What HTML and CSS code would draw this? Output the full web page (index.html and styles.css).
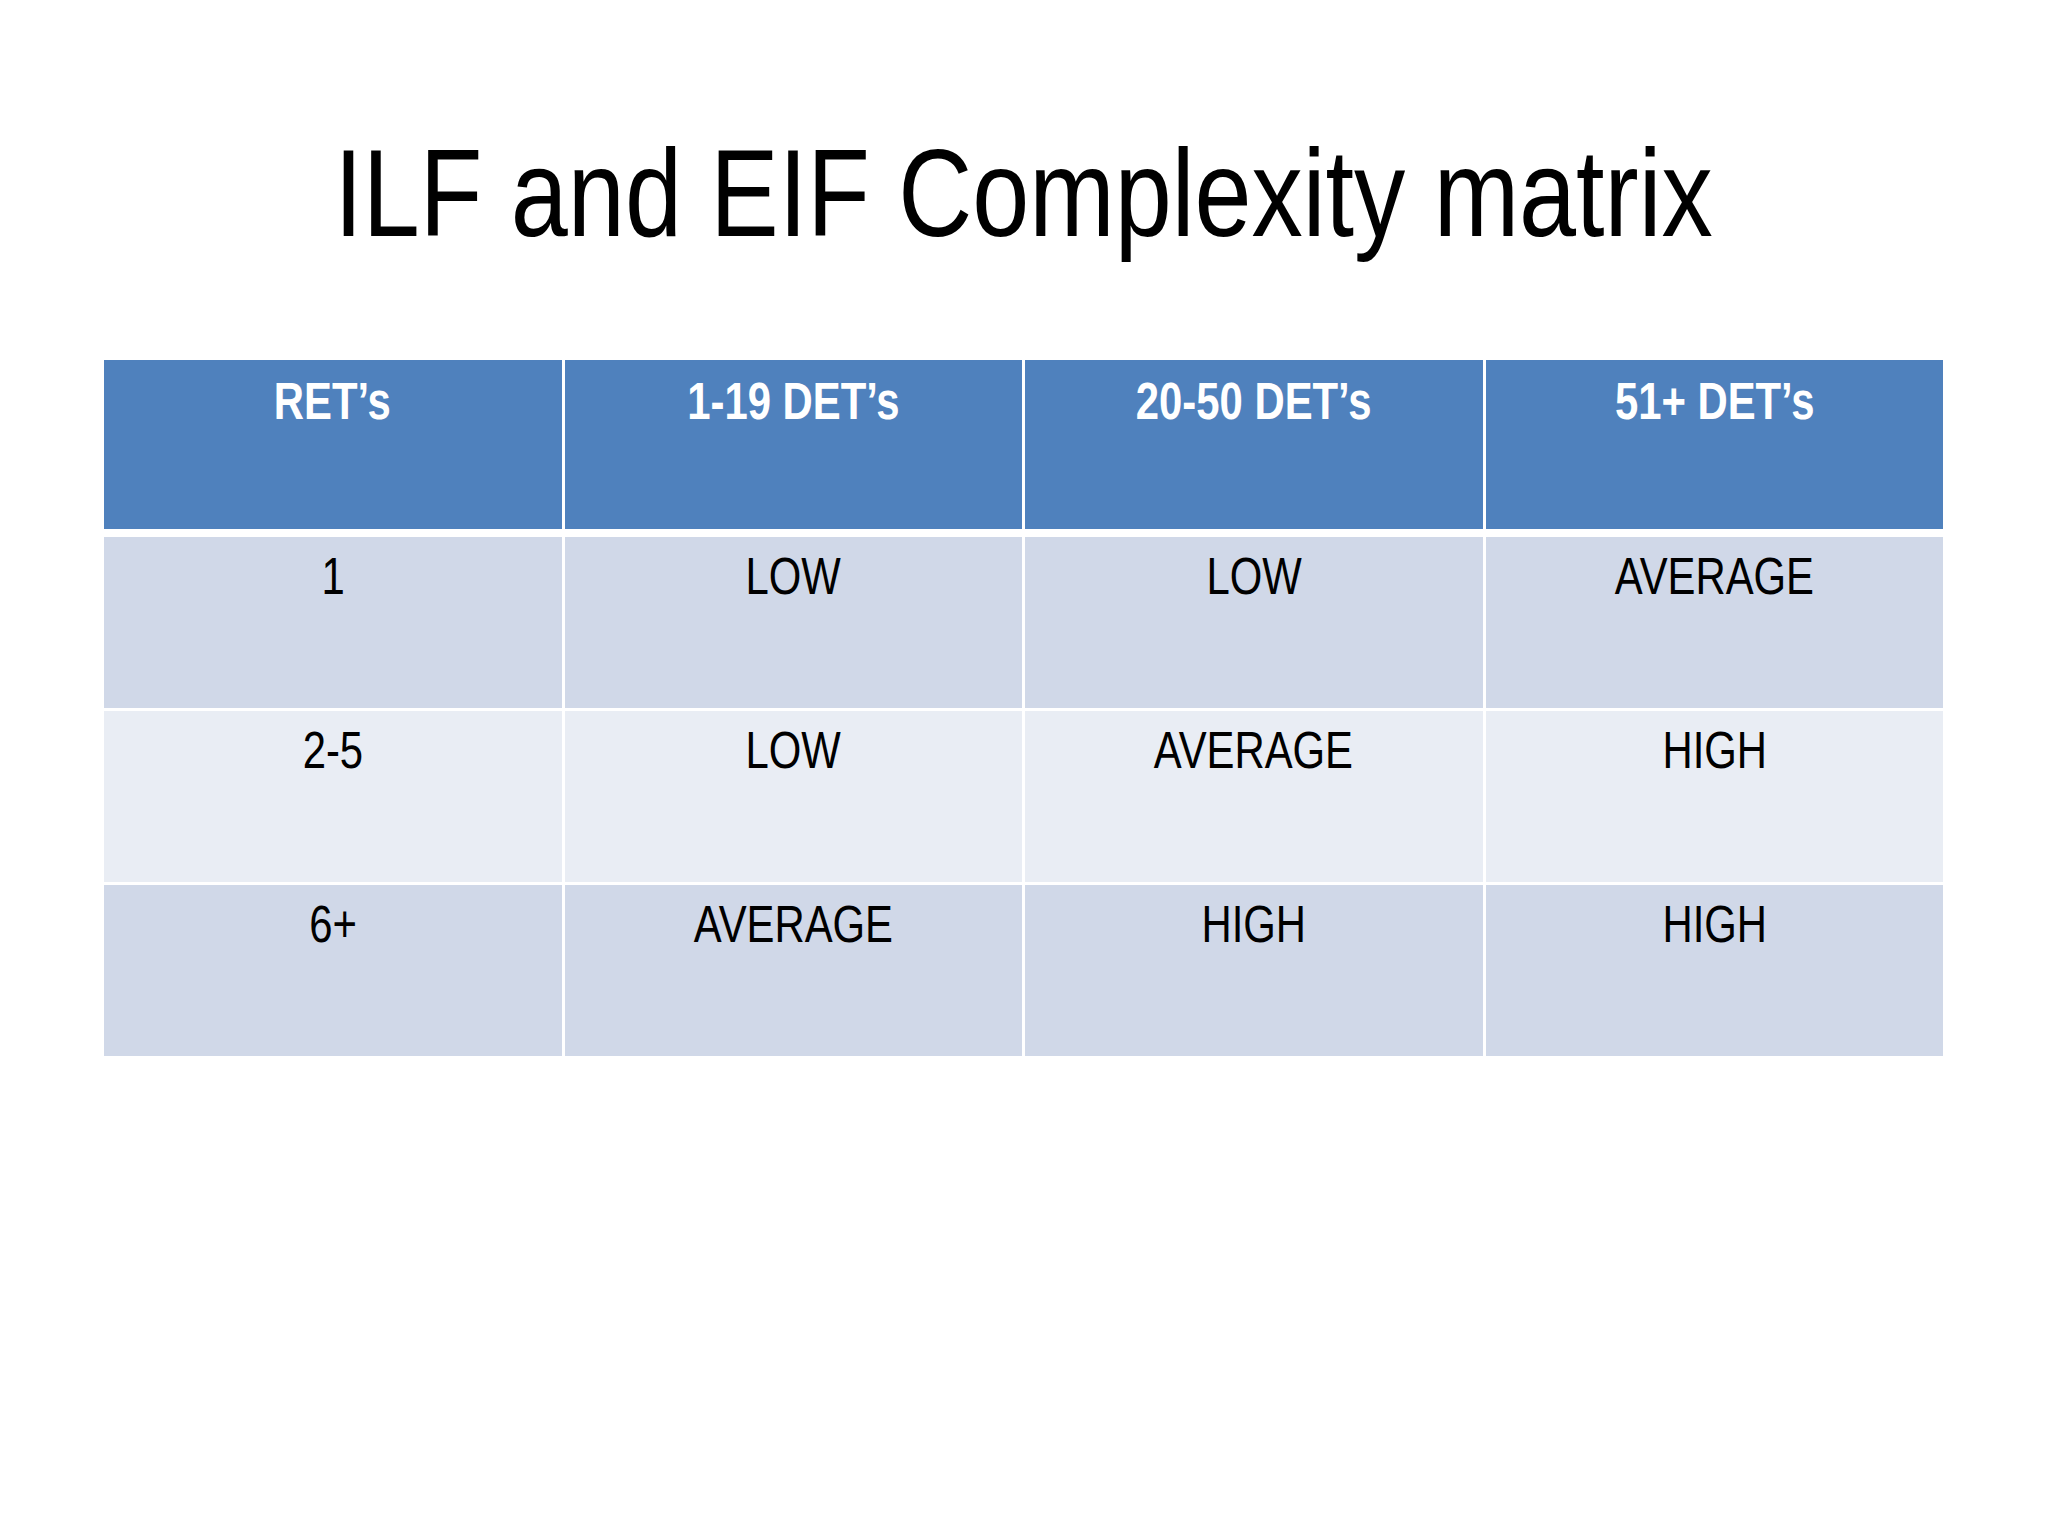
FILE: index.html
```html
<!DOCTYPE html>
<html>
<head>
<meta charset="utf-8">
<link rel="stylesheet" href="styles.css">
</head>
<body>
<div class="slide">
  <h1 class="title"><span class="narrow">ILF and EIF Complexity matrix</span></h1>
  <div class="matrix">
    <div class="row head">
      <div class="cell"><span class="narrow">RET’s</span></div>
      <div class="cell"><span class="narrow">1-19 DET’s</span></div>
      <div class="cell"><span class="narrow">20-50 DET’s</span></div>
      <div class="cell"><span class="narrow">51+ DET’s</span></div>
    </div>
    <div class="body">
      <div class="row odd">
        <div class="cell"><span class="narrow">1</span></div>
        <div class="cell"><span class="narrow">LOW</span></div>
        <div class="cell"><span class="narrow">LOW</span></div>
        <div class="cell"><span class="narrow">AVERAGE</span></div>
      </div>
      <div class="row even">
        <div class="cell"><span class="narrow">2-5</span></div>
        <div class="cell"><span class="narrow">LOW</span></div>
        <div class="cell"><span class="narrow">AVERAGE</span></div>
        <div class="cell"><span class="narrow">HIGH</span></div>
      </div>
      <div class="row odd">
        <div class="cell"><span class="narrow">6+</span></div>
        <div class="cell"><span class="narrow">AVERAGE</span></div>
        <div class="cell"><span class="narrow">HIGH</span></div>
        <div class="cell"><span class="narrow">HIGH</span></div>
      </div>
    </div>
  </div>
</div>
</body>
</html>
```

FILE: styles.css
```css
html, body {
  margin: 0;
  padding: 0;
  background: #ffffff;
}

.slide {
  width: 2048px;
  height: 1536px;
  font-family: "Liberation Sans Narrow", "Liberation Sans", Arial, sans-serif;
  color: #000000;
  padding-top: 130px;
  box-sizing: border-box;
}

.narrow {
  display: inline-block;
  white-space: nowrap;
  transform: scaleX(0.82);
  transform-origin: center;
}

.title {
  margin: 0;
  font-weight: normal;
  font-size: 125px;
  line-height: 125px;
  height: 125px;
  text-align: center;
}

.matrix {
  margin: 105px 0 0 104px;
  width: 1839px;
  display: flex;
  flex-direction: column;
  gap: 8px;
}

.body {
  display: flex;
  flex-direction: column;
  gap: 3px;
}

.row {
  display: grid;
  grid-template-columns: repeat(4, 1fr);
  column-gap: 3px;
  height: 171px;
}

.cell {
  text-align: center;
  font-size: 51px;
  line-height: 51px;
  padding-top: 14px;
  box-sizing: border-box;
}

.head {
  height: 169px;
}

.head .cell {
  background: #4f81bd;
  color: #ffffff;
  font-weight: bold;
  padding-top: 16px;
}

.odd .cell {
  background: #d0d8e8;
}

.even .cell {
  background: #e9edf4;
}
```
